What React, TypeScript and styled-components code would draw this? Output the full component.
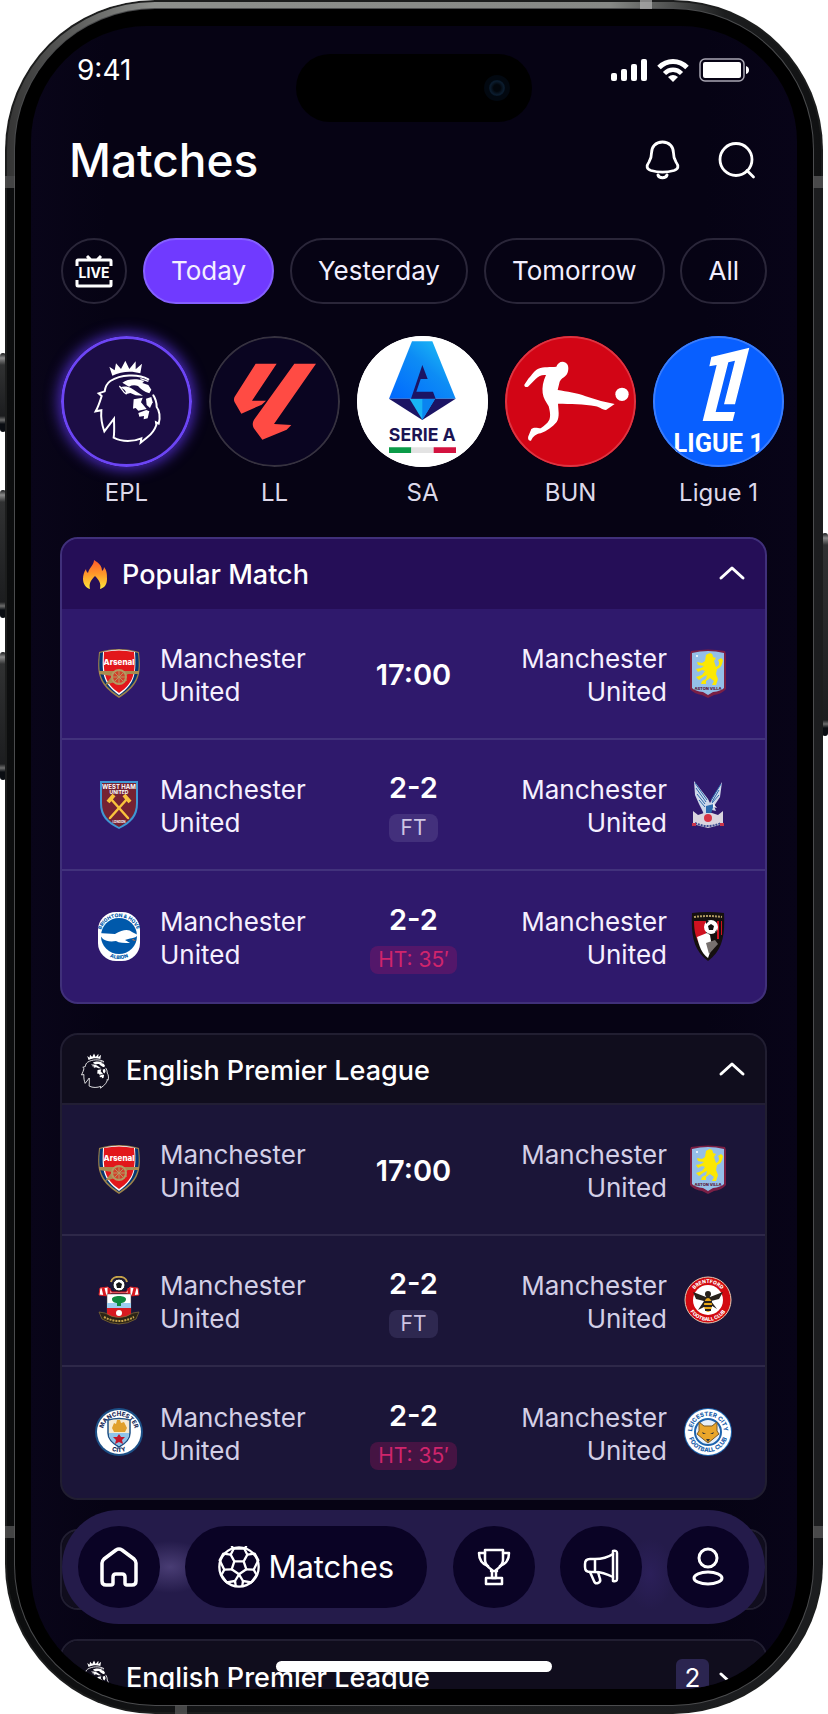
import React from "react";
import styled, { createGlobalStyle, css } from "styled-components";

const GlobalStyle = createGlobalStyle`
  * { box-sizing: border-box; }
  body { margin: 0; background: #ffffff; font-family: Inter, "Liberation Sans", sans-serif; overflow: hidden; }
  button { font: inherit; color: inherit; padding: 0; margin: 0; border: 0; background: none; cursor: pointer; }
  h1, h2, p, ul { margin: 0; padding: 0; }
  ul { list-style: none; }
  svg { display: block; }
`;

/* ---------- device ---------- */

const Stage = styled.div`
  position: relative;
  height: 100vh;
  padding: 0 5px;
`;

const SideKey = styled.span<{ $side: "left" | "right"; $top: number; $size: number }>`
  position: absolute;
  ${(p) => p.$side}: 0;
  top: ${(p) => p.$top}px;
  width: 6px;
  height: ${(p) => p.$size}px;
  border-radius: 3px;
  background: linear-gradient(180deg, #17181a 0, #8b8b8b 5px, #303132 12px, #1c1d1f calc(100% - 16px), #6c6c6c calc(100% - 12px), #0a0d12 calc(100% - 8px));
`;

const Frame = styled.div`
  position: relative;
  height: 100%;
  padding: 9px 10px;
  border-radius: 150px;
  background:
    linear-gradient(90deg, #333333 0, #8d8f8c 18%, #868885 74%, #1c1d1e 88%, #101112 100%) top / 100% 176px no-repeat,
    linear-gradient(90deg, #0c0d0e 0, #1b1c1e 50%, #1c1d1f 100%);
  box-shadow: inset 0 0 0 2px #1c1d1d;
`;

const bandEdges = {
  top: css`top: 0; left: 635px; width: 12px; height: 9px;`,
  leftTop: css`left: 0; top: 176px; width: 10px; height: 12px;`,
  rightTop: css`right: 0; top: 176px; width: 10px; height: 12px;`,
  leftBottom: css`left: 0; bottom: 176px; width: 10px; height: 12px;`,
  rightBottom: css`right: 0; bottom: 176px; width: 10px; height: 12px;`,
  bottom: css`left: 170px; bottom: 0; width: 12px; height: 9px;`,
};

const Band = styled.span<{ $at: keyof typeof bandEdges }>`
  position: absolute;
  background: ${(p) => (p.$at === "top" ? "#b4b4b4" : "#5c5c5c")};
  opacity: 0.7;
  ${(p) => bandEdges[p.$at]}
`;

const Bezel = styled.div`
  height: 100%;
  padding: 16px;
  padding-top: 17px;
  border-radius: 140px;
  background: #000000;
  box-shadow: 0 0 0 1px #4b4c4e;
`;

const Screen = styled.main`
  position: relative;
  height: 100%;
  border-radius: 116px;
  overflow: hidden;
  background: linear-gradient(90deg, #090519 0, #060314 10%, #060314 88%, #080418 100%);
  color: #ffffff;
`;

const Island = styled.div`
  position: absolute;
  z-index: 3;
  top: 28px;
  left: 50%;
  width: 236px;
  height: 68px;
  margin-left: -118px;
  border-radius: 34px;
  background: #000000;
  display: flex;
  align-items: center;
  justify-content: flex-end;
  padding-right: 22px;
`;

const Lens = styled.span`
  width: 26px;
  height: 26px;
  border-radius: 50%;
  border: 5px solid #020810;
  background: radial-gradient(circle, #02060c 30%, #0b1c2e 60%, #030c18 100%);
`;

const StatusBar = styled.div`
  display: flex;
  align-items: center;
  justify-content: space-between;
  height: 88px;
  padding: 0 46px;
  font-size: 28px;
  line-height: 32px;
`;

const StatusIcons = styled.div`
  display: flex;
  align-items: center;
  gap: 10px;
`;

/* ---------- header and filters ---------- */

const Header = styled.header`
  display: flex;
  align-items: center;
  justify-content: space-between;
  height: 92px;
  padding: 0 40px 0 38px;
`;

const Title = styled.h1`
  font-size: 46px;
  line-height: 56px;
  font-weight: 500;
`;

const HeaderActions = styled.div`
  display: flex;
  gap: 34px;
`;

const Filters = styled.div`
  display: flex;
  justify-content: space-between;
  padding: 32px 30px 0;
`;

const Chip = styled.button<{ $active?: boolean; $round?: boolean }>`
  display: grid;
  place-items: center;
  height: 66px;
  min-width: 66px;
  && { padding: ${(p) => (p.$round ? "0" : "0 26px")}; }
  && { border: 2px solid ${(p) => (p.$active ? "#8560ff" : "#2a2639")}; }
  border-radius: 33px;
  && { background: ${(p) => (p.$active ? "#703aff" : "transparent")}; }
  && { color: #f3efff; }
  && { font-size: 26px; font-weight: 400; line-height: 32px; }
`;

/* ---------- leagues ---------- */

const Leagues = styled.div`
  display: flex;
  gap: 17px;
  padding: 32px 30px 0;
`;

const League = styled.button`
  flex: none;
  display: flex;
  flex-direction: column;
  align-items: center;
  gap: 10px;
  && { color: #ddd9ea; font-size: 24px; line-height: 32px; font-weight: 400; }
`;

const LeagueDisc = styled.span<{ $bg: string; $ring: string; $active?: boolean }>`
  position: relative;
  display: block;
  width: 131px;
  height: 131px;
  border-radius: 50%;
  overflow: hidden;
  background: ${(p) => p.$bg};
  box-shadow: ${(p) => (p.$active ? "0 0 14px 3px #4a2ab8" : "none")};

  &::after {
    content: "";
    position: absolute;
    inset: 0;
    border-radius: 50%;
    border: ${(p) => (p.$active ? 3 : 2)}px solid ${(p) => p.$ring};
  }
`;

/* ---------- cards ---------- */

const tones = {
  popular: { head: "#250e57", body: "#2f196c", line: "#42327c", edge: "#40307a", split: "#250e57", text: "#f6f0ff", tag: "#43307c" },
  league: { head: "#100d1d", body: "#1b1538", line: "#2e2849", edge: "#211e31", split: "#221e34", text: "#d3cfe6", tag: "#2e2850" },
};
type Tone = keyof typeof tones;

const Cards = styled.div`
  display: flex;
  flex-direction: column;
  gap: 29px;
  padding: 28px 30px 0 29px;
`;

const Card = styled.section<{ $tone: Tone }>`
  flex: none;
  border: 2px solid ${(p) => tones[p.$tone].edge};
  border-radius: 18px;
  overflow: hidden;
  background: ${(p) => tones[p.$tone].body};
`;

const CardHead = styled.header<{ $tone: Tone; $closed?: boolean }>`
  display: flex;
  align-items: center;
  gap: ${(p) => (p.$tone === "league" ? 16 : 12)}px;
  height: ${(p) => (p.$closed ? 77 : 70)}px;
  padding: ${(p) => (p.$closed ? "0 18px 4px" : "4px 18px 0")};
  background: ${(p) => tones[p.$tone].head};
  border-bottom: ${(p) => (p.$closed ? "0" : `2px solid ${tones[p.$tone].split}`)};
`;

const CardTitle = styled.h2`
  flex: 1;
  font-size: 27px;
  line-height: 32px;
  font-weight: 500;
`;

const CardActions = styled.div`
  display: flex;
  align-items: center;
  gap: 8px;
`;

const Count = styled.span`
  display: grid;
  place-items: center;
  width: 33px;
  height: 38px;
  border-radius: 6px;
  background: #2b2550;
  font-size: 26px;
  line-height: 32px;
`;

const Row = styled.li<{ $tone: Tone }>`
  display: grid;
  grid-template-columns: 48px 1fr auto 1fr 48px;
  align-items: center;
  column-gap: 17px;
  height: 131px;
  padding: 0 33px;
  color: ${(p) => tones[p.$tone].text};
  border-bottom: 2px solid ${(p) => tones[p.$tone].line};
  &:last-child { border-bottom: 0; }
`;

const Team = styled.p<{ $right?: boolean }>`
  justify-self: ${(p) => (p.$right ? "end" : "start")};
  width: min-content;
  padding-top: 2px;
  text-align: ${(p) => (p.$right ? "right" : "left")};
  font-size: 26px;
  line-height: 33px;
  font-weight: 400;
`;

const Result = styled.div`
  display: flex;
  flex-direction: column;
  align-items: center;
  gap: 8px;
  padding-top: 2px;
`;

const Score = styled.strong`
  color: #ffffff;
  font-size: 29px;
  line-height: 36px;
  font-weight: 600;
`;

const Tag = styled.span<{ $tone: Tone; $live?: boolean }>`
  padding: 0 ${(p) => (p.$live ? 8 : 12)}px;
  border-radius: 8px;
  font-size: 21px;
  line-height: 28px;
  font-weight: 400;
  color: ${(p) => (p.$live ? "#cf256c" : "#cdc5e4")};
  background: ${(p) => (p.$live ? "rgba(190, 20, 100, 0.26)" : tones[p.$tone].tag)};
`;

/* ---------- bottom bar ---------- */

const TabBar = styled.nav`
  position: absolute;
  z-index: 2;
  left: 31px;
  right: 32px;
  bottom: 65px;
  display: flex;
  justify-content: space-between;
  padding: 16px;
  border-radius: 57px;
  background:
    radial-gradient(ellipse 42px 26px at 108px 57px, rgba(85, 72, 130, 0.75), rgba(85, 72, 130, 0)),
    radial-gradient(ellipse 24px 36px at 588px 64px, rgba(60, 42, 125, 0.3), rgba(60, 42, 125, 0)),
    #241b4a;
`;

const Tab = styled.button<{ $wide?: boolean }>`
  display: flex;
  align-items: center;
  justify-content: center;
  gap: 8px;
  height: 82px;
  width: ${(p) => (p.$wide ? "242px" : "82px")};
  border-radius: 41px;
  && { background: #0a0325; font-size: 31px; line-height: 38px; font-weight: 400; }
`;

const HomeIndicator = styled.div`
  position: absolute;
  z-index: 3;
  left: 50%;
  bottom: 17px;
  width: 276px;
  height: 11px;
  margin-left: -138px;
  border-radius: 6px;
  background: #ffffff;
`;

/* ---------- drawings ---------- */

const line = { fill: "none", stroke: "#fff", strokeLinecap: "round" as const, strokeLinejoin: "round" as const };

const LionShapes = () => (
  <>
    <path fill="#fff" d="M219 167 210 140l16 11 4-21 15 17 13-25 12 25 19-23 0 24 19-17-5 29c-28-9-58-5-84 7z" />
    <path
      {...line}
      strokeWidth="6"
      strokeLinejoin="miter"
      d="M327 178c-32-18-84-14-114 5-10 7-15 17-17 31l-18 6 9 8c-5 16-9 30-18 46l17-3c-2 24 2 44 9 63l29-38c0 18 2 36-1 57 26 14 60 12 83 2l-2 13 20-16c14-11 22-22 27-37l-1-8 8 4c6-20 2-40-6-50 0-18-4-26-10-35"
    />
    <path fill="#fff" d="M249 188c16-12 44-13 66-5l-6 6 18 6 9 14-6 11c-15-5-26-13-34-22-9-3-18-3-27 2z" />
    <path fill="#fff" d="M242 202c12-4 24-3 34 3 13 8 24 17 35 22l-22-1-16-7-14 4c4-9-7-17-17-21z" />
    <path fill="#fff" d="M283 238l27-5-5 14 17 20-25 5-8-8-8 2z" />
    <path fill="#fff" d="M320 236l16-5 4 16-8 17-10-9z" />
    <path fill="#fff" d="M297 279l24-9 9 4-5 21-12 3 1-10-14 2z" />
    <path fill="none" stroke="#fff" strokeWidth="4" d="M240 198c8 8 10 20 22 24M303 176l24 8" />
  </>
);

const LionIcon = () => (
  <svg width="30" height="36" viewBox="160 118 210 256" aria-hidden="true">
    <LionShapes />
  </svg>
);

const leagueArt = {
  EPL: (
    <svg width="131" height="131" viewBox="65 48 393 393">
      <LionShapes />
    </svg>
  ),
  LL: (
    <svg width="131" height="131" viewBox="508 48 393 393" fill="#ff4b44">
      <path d="M648 131h63l-74 111h42l-13 12-61 27-20-34c-3-6-3-12 1-18z" />
      <path d="M764 131h65L703 312l52 3-14 14-73 30-26-35c-4-8-4-17 1-25z" />
    </svg>
  ),
  SA: (
    <svg width="131" height="131" viewBox="-158 48 393 393">
      <defs>
        <linearGradient id="sa" x1="0" y1="1" x2="1" y2="0">
          <stop offset="0" stopColor="#0068ff" />
          <stop offset=".55" stopColor="#0d8cf5" />
          <stop offset="1" stopColor="#1fc8f5" />
        </linearGradient>
      </defs>
      <path fill="url(#sa)" d="M7 64h61l70 172H-62z" />
      <path fill="#1b1464" d="M-62 236h200L38 300z" />
      <path fill="#18b4f5" d="M0 237h76L38 299z" />
      <path fill="#0a84f0" d="M38 237h38L38 299z" />
      <path fill="#1b1464" d="M38 135l16 42H33l-13 38h50l8 21H4z" />
      <text x="38" y="362" textAnchor="middle" fontFamily="Inter" fontWeight="700" fontSize="53" fill="#1b1452">SERIE A</text>
      <path fill="#0b9b48" d="M-62 382H5v17h-67z" />
      <path fill="#e3e3e3" d="M5 382h67v17H5z" />
      <path fill="#d3123f" d="M72 382h67v17H72z" />
    </svg>
  ),
  BUN: (
    <svg width="131" height="131" viewBox="285 48 393 393" fill="#fff">
      <path d="M439 140c3-9 10-15 19-15 11 1 18 9 17 21-1 9-2 16-9 22-5 5-13 8-17 17l-6 25c28 5 58 8 84 19l46 14 41 9-26 18c-14-1-20-10-31-11-36-8-76-6-113-8l2 28c0 10-1 20-6 27-12 15-29 26-48 34-14 2-22 8-29 22-8 2-10-6-8-13l9-22c9-7 20-2 28-2 10-8 20-14 26-26 5-12 1-28-2-40-8-14-16-24-18-40-2-17 1-35 10-54-14-1-21 2-31 12l-23 23c-6 3-12-1-11-6l13-19c11-12 17-24 29-29 17-7 36-4 54-6z" />
      <circle cx="636" cy="223" r="20" />
    </svg>
  ),
  L1: (
    <svg width="131" height="131" viewBox="728 48 393 393" fill="#fff">
      <path d="M903 111l114-28-43 170h-33l33-131-20 5-38 149h58l-7 27h-90l42-168-22 4z" />
      <text x="925" y="396" textAnchor="middle" fontFamily="Roboto" fontWeight="700" fontSize="76">LIGUE 1</text>
    </svg>
  ),
};

const Flame = () => (
  <svg width="30" height="34" viewBox="0 0 30 34" aria-hidden="true">
    <defs>
      <linearGradient id="fl" x1="0" y1="0" x2="0" y2="1">
        <stop offset="0" stopColor="#ff5a2b" />
        <stop offset=".5" stopColor="#ff9a2a" />
        <stop offset="1" stopColor="#ffe73a" />
      </linearGradient>
    </defs>
    <path
      fill="url(#fl)"
      d="M14 2c5 3 8 6 8 11 1-1 2-2 2-4 3 4 3 7 3 12 0 6-3 9-7 10 1-5 0-8-5-13-5 5-6 8-5 13-4-1-7-5-7-10 0-4 1-7 3-10 0 2 1 3 2 4 1-5 6-8 6-13z"
    />
  </svg>
);

const Chevron = ({ down }: { down?: boolean }) => (
  <svg width="30" height="24" viewBox="0 0 30 24" aria-hidden="true">
    <path {...line} strokeWidth="3" d={down ? "M4 8l11 10L26 8" : "M4 15L15 5l11 10"} />
  </svg>
);

const ring = (id: string, r: number, top: string, bottom: string, color: string, size = 6) => (
  <>
    <defs>
      <path id={`${id}t`} d={`M${24 - r} 24a${r} ${r} 0 0 1 ${2 * r} 0`} />
      <path id={`${id}b`} d={`M${24 - r - 4} 24a${r + 4} ${r + 4} 0 0 0 ${2 * r + 8} 0`} />
    </defs>
    <g fontFamily="Inter" fontWeight="800" fontSize={size} fill={color} textAnchor="middle">
      <text><textPath href={`#${id}t`} startOffset="50%">{top}</textPath></text>
      <text><textPath href={`#${id}b`} startOffset="50%">{bottom}</textPath></text>
    </g>
  </>
);

const crests: Record<string, (id: string) => React.ReactNode> = {
  arsenal: () => (
    <>
      <path fill="#9c824a" d="M4 3c13-4 27-4 40 0 2 20 2 32-20 46C2 35 2 23 4 3z" />
      <path fill="#063672" d="M5 4c12-4 26-4 38 0 2 19 1 30-19 43C4 34 3 23 5 4z" />
      <path fill="#fff" d="M8 3c11-3 21-3 32 0 1 20 1 31-16 43C7 34 7 23 8 3z" />
      <path fill="#e2171b" d="M9 3c10-2 20-2 30 0 2 20 0 31-15 41C9 34 8 23 9 3z" />
      <text x="24" y="16" textAnchor="middle" fontFamily="Inter" fontWeight="800" fontSize="8" fill="#fff">Arsenal</text>
      <path fill="#a88b50" d="M4 22h40v3H33l-3 2 2 5-12 1-10 3 7-9-13-2z" />
      <circle cx="24" cy="28" r="7" fill="#d3402c" stroke="#b39a62" strokeWidth="2" />
      <path stroke="#b39a62" d="M18 28h12M24 22v12M20 24l8 8M28 24l-8 8" />
    </>
  ),
  villa: () => (
    <>
      <path fill="#7a1f45" d="M7 2q17-3 34 0l1 3v35q-4 5-12 6l-6 3-6-3Q10 45 6 40V5z" />
      <path fill="#94bfe8" d="M8 4q16-4 32 0v35q-3 3-11 4l-5 3-5-3q-8-1-11-4z" />
      <path fill="#fce803" d="M22 6c4-3 7-2 7 2l3 1-2 3 2 6c3-1 4-4 2-7l3-2 2 2c-1 6-3 8-6 9l-1 5 2 5-2 6h-4l2-4-4-3-4 3v3h-5l1-3 4-2 1-4-4 2-4 3-3-3 6-2 3-4-3-1-4 2-2-3 5-1 3-2-6-1-1-3 5 1 3-2z" />
      <circle cx="13" cy="7" r="1" fill="#fff" />
      <text x="24" y="41" textAnchor="middle" fontFamily="Inter" fontWeight="800" fontSize="4" fill="#5b1737">ASTON VILLA</text>
    </>
  ),
  westham: () => (
    <>
      <path fill="#3f97d3" d="M5 1h38v22c0 14-7 20-19 26C12 43 5 37 5 23z" />
      <path fill="#752233" d="M7 3h34v20c0 12-6 18-17 24C13 41 7 35 7 23z" />
      <g fontFamily="Inter" fontWeight="700" fill="#fff" textAnchor="middle">
        <text x="24" y="9" fontSize="6">WEST HAM</text>
        <text x="24" y="14" fontSize="5">UNITED</text>
        <text x="24" y="43" fontSize="3">LONDON</text>
      </g>
      <path stroke="#f9c33c" strokeWidth="2.500" strokeLinecap="round" d="M16 19l17 19M32 19L15 38" />
      <path stroke="#f9c33c" strokeWidth="4" d="M13 22l6-7M29 15l6 7" />
    </>
  ),
  palace: () => (
    <>
      <path fill="#cfd8ea" d="M10 1l14 18 2 4 5-9 7-12-2 15-6 9 2 5-4-1-4 6h-4l-1-4-4-8-4-9z" />
      <g stroke="#2b69ad" strokeWidth="1" fill="none">
        <path d="M11 3l12 17M12 8l10 14M13 14l8 10M15 20l6 7M37 4L27 20M35 10l-7 12M35 15l-7 8" />
      </g>
      <path fill="#2b69ad" d="M22 26l8-2-3 10h-5z" />
      <path fill="#f2f2f5" d="M29 23l4 5-4-1z" />
      <path fill="#d9d4df" d="M9 31l5 4 6-2h8l6 2 5-4v13l-7 2-8 2-8-2-7-2z" />
      <circle cx="24" cy="38" r="4" fill="#d83345" />
      <path fill="none" stroke="#3b4a90" strokeWidth="2" strokeDasharray="2 1" d="M11 43q13 6 26 0" />
      <path fill="#c8334a" d="M8 43h4v3H8zM36 43h4v3h-4z" />
    </>
  ),
  brighton: (id) => (
    <>
      <rect x="3" y="0" width="42" height="49" rx="18" fill="#fff" />
      <circle cx="24" cy="24" r="18" fill="#0059ab" />
      <path fill="#fff" d="M3 21l17 1c8-5 14-5 17-2l6 3c-3 4-9 3-13 5l5 3c-6 0-11 0-14-2-6 1-10 0-13-2z" />
      <path fill="#ef7b2a" d="M38 27l3 2-4-1z" />
      {ring(id, 19, "BRIGHTON & HOVE", "ALBION", "#0059ab", 5)}
    </>
  ),
  bournemouth: () => (
    <>
      <path fill="#15100f" d="M8 1q16-2 32 0c1 22-1 37-16 48C9 38 7 23 8 1z" />
      <path fill="#cf1120" d="M10 9h12v30C12 31 10 20 10 9z" />
      <path fill="#cf1120" d="M33 9h2v18h-2zM37 9h1v14h-1z" />
      <path fill="none" stroke="#b19a63" strokeWidth="2" strokeDasharray="2 1" d="M10 5q14-2 28 0" />
      <path fill="#fff" d="M13 25l10-4 3 2 2 12-4 11c-6-4-9-12-11-21z" />
      <path fill="#77716f" d="M22 31l9-3 3 4-9 10z" />
      <circle cx="27" cy="15" r="7" fill="#fff" />
      <path fill="#111" d="M27 12l3 2-1 4h-4l-1-4zM22 9l3 0-3 3zM31 20l2-3-1 4z" />
    </>
  ),
  saints: () => (
    <>
      <path fill="none" stroke="#c5a24a" strokeWidth="2" d="M16 6c1-7 15-7 16 0" />
      <path fill="#fff" stroke="#d71920" strokeWidth="1" d="M5 12l8-1 4 5h14l4-5 8 1 1 7-9 1-3-3H16l-3 3-9-1z" />
      <path stroke="#d71920" strokeWidth="3" d="M8 12l2 8M14 12v6M40 12l-2 8M34 12v6" />
      <circle cx="24" cy="9" r="6" fill="#fff" stroke="#151515" />
      <path fill="#151515" d="M24 6l3 2-1 4h-4l-1-4z" />
      <path fill="#fff" stroke="#444" strokeWidth=".5" d="M12 18h24v19H12z" />
      <path fill="#9ccdf0" d="M12 27h24v5H12z" />
      <path fill="#d71920" d="M12 32h24v6q-4 6-12 7-8-1-12-7z" />
      <path fill="#0f8a3f" d="M17 23c0-4 14-4 14 0 0 3-3 4-5 4v3h-4v-3c-2 0-5-1-5-4z" />
      <circle cx="24" cy="37" r="3" fill="#fff" />
      <path fill="#2b2416" stroke="#8a713a" strokeWidth=".7" d="M4 36l6 1q14 9 28 0l6-1-3 7q-17 10-34 0z" />
      <path fill="none" stroke="#c5a24a" strokeWidth="2" strokeDasharray="2 1" d="M9 41q15 8 30 0" />
    </>
  ),
  brentford: (id) => (
    <>
      <circle cx="24" cy="24" r="23" fill="#d20a10" stroke="#e7c9b0" />
      <circle cx="24" cy="24" r="15" fill="#fff" />
      {ring(id, 17, "BRENTFORD", "FOOTBALL CLUB", "#fff", 5)}
      <path fill="#27211b" d="M9 16l13 5 1-4h2l1 4 13-5-4 7-8 2 6 8-8-5-1 2-2 0-8 4 6-9-8-2z" />
      <ellipse cx="24" cy="29" rx="4" ry="7" fill="#e8a919" />
      <path stroke="#27211b" strokeWidth="2" d="M20 26h8M20 30h8M21 34h6" />
      <circle cx="24" cy="18" r="3" fill="#27211b" />
    </>
  ),
  city: (id) => (
    <>
      <circle cx="24" cy="24" r="24" fill="#1c4f86" />
      <circle cx="24" cy="24" r="22" fill="#fff" />
      {ring(id, 16, "MANCHESTER", "CITY", "#1c2c5b", 6)}
      <path fill="#f7ead0" stroke="#1c4f86" strokeWidth="1.500" d="M13 12q11-3 22 0v13c0 6-4 10-11 14-7-4-11-8-11-14z" />
      <path fill="#8fc3ea" d="M14 25h20c0 6-3 9-10 13-7-4-10-7-10-13z" />
      <path fill="#e0a02c" d="M17 20l2-5 2 1 1-4h3l1 3 3-1 3 6-2 4H19z" />
      <path fill="#c3152b" d="M24 26l2 3 4 0-3 3 1 4-4-2-4 2 1-4-3-3 4 0z" />
    </>
  ),
  leicester: (id) => (
    <>
      <circle cx="24" cy="24" r="24" fill="#1d63ad" />
      <circle cx="24" cy="24" r="23" fill="#fff" />
      {ring(id, 16, "LEICESTER CITY", "FOOTBALL CLUB", "#1d63ad", 6)}
      <circle cx="24" cy="24" r="13" fill="#e8f0f8" stroke="#1d63ad" strokeWidth="2" />
      <path fill="#eaa62a" stroke="#7a5a28" d="M15 14l5 4h8l5-4v9l2 3-6 5-5 4-5-4-6-5 2-3z" />
      <path fill="#333" d="M18 24l4 2-3 0zM30 24l-4 2 3 0z" />
      <path fill="#333" d="M22 31h4l-2 3z" />
    </>
  ),
};

const Crest = ({ name, id }: { name: string; id: string }) => (
  <svg width="48" height="50" viewBox="0 0 48 50" aria-hidden="true">
    {crests[name](id)}
  </svg>
);

/* ---------- data ---------- */

type Match = { home: string; away: string; score: string; tag?: string; live?: boolean };

const popular: Match[] = [
  { home: "arsenal", away: "villa", score: "17:00" },
  { home: "westham", away: "palace", score: "2-2", tag: "FT" },
  { home: "brighton", away: "bournemouth", score: "2-2", tag: "HT: 35′", live: true },
];

const premier: Match[] = [
  { home: "arsenal", away: "villa", score: "17:00" },
  { home: "saints", away: "brentford", score: "2-2", tag: "FT" },
  { home: "city", away: "leicester", score: "2-2", tag: "HT: 35′", live: true },
];

const leagues = [
  { label: "EPL", art: leagueArt.EPL, bg: "#1c0d45", ring: "#6c45f5", active: true },
  { label: "LL", art: leagueArt.LL, bg: "#0a0521", ring: "#36323f" },
  { label: "SA", art: leagueArt.SA, bg: "#ffffff", ring: "#ffffff" },
  { label: "BUN", art: leagueArt.BUN, bg: "#d20515", ring: "#dc3542" },
  { label: "Ligue 1", art: leagueArt.L1, bg: "#085fff", ring: "#3c7dfa" },
];

const MatchList = ({ items, tone }: { items: Match[]; tone: Tone }) => (
  <ul>
    {items.map((m) => (
      <Row key={m.home} $tone={tone}>
        <Crest name={m.home} id={m.home} />
        <Team>Manchester United</Team>
        <Result>
          <Score>{m.score}</Score>
          {m.tag && <Tag $tone={tone} $live={m.live}>{m.tag}</Tag>}
        </Result>
        <Team $right>Manchester United</Team>
        <Crest name={m.away} id={m.away} />
      </Row>
    ))}
  </ul>
);

export default function App() {
  return (
    <>
      <GlobalStyle />
      <Stage>
        <SideKey $side="left" $top={353} $size={79} />
        <SideKey $side="left" $top={490} $size={128} />
        <SideKey $side="left" $top={652} $size={128} />
        <SideKey $side="right" $top={533} $size={203} />
        <Frame>
          <Band $at="top" />
          <Band $at="leftTop" />
          <Band $at="rightTop" />
          <Band $at="leftBottom" />
          <Band $at="rightBottom" />
          <Band $at="bottom" />
          <Bezel>
            <Screen>
              <Island><Lens /></Island>
              <StatusBar>
                <span>9:41</span>
                <StatusIcons>
                  <svg width="36" height="24" viewBox="0 0 36 24" fill="#fff" aria-hidden="true">
                    <rect x="0" y="15" width="6" height="8" rx="2" />
                    <rect x="10" y="11" width="6" height="12" rx="2" />
                    <rect x="20" y="6" width="6" height="17" rx="2" />
                    <rect x="30" y="1" width="6" height="22" rx="2" />
                  </svg>
                  <svg width="32" height="24" viewBox="0 0 32 24" fill="none" stroke="#fff" strokeWidth="5" aria-hidden="true">
                    <path d="M2 9.500c8-8 20-8 28 0" />
                    <path d="M7.500 15.500c5-5 12-5 17 0" strokeWidth="4.500" />
                    <path d="M16 24l-5-5q5-4 10 0z" fill="#fff" stroke="none" />
                  </svg>
                  <svg width="52" height="24" viewBox="0 0 52 24" aria-hidden="true">
                    <rect x="1" y="1" width="44" height="22" rx="5" fill="none" stroke="#a9a7b3" strokeWidth="1.500" />
                    <rect x="4" y="4" width="38" height="16" rx="2" fill="#fff" />
                    <path d="M47 8q3 1 3 4t-3 4z" fill="#fff" />
                  </svg>
                </StatusIcons>
              </StatusBar>

              <Header>
                <Title>Matches</Title>
                <HeaderActions>
                  <button aria-label="Notifications">
                    <svg width="40" height="40" viewBox="0 0 40 40" {...line} strokeWidth="2.800">
                      <path d="M19.500 2c-7 0-11 5-11 11 0 5-.5 6-2.500 9-3 4-2.500 7 2 8.500 7 2 16 2 23 0 4.500-1.500 5-4.500 2-8.500-2-3-2.500-4-2.500-9 0-6-4-11-11-11z" />
                      <path d="M15 35c1 3.500 8 3.500 9 0" strokeWidth="3" />
                    </svg>
                  </button>
                  <button aria-label="Search">
                    <svg width="40" height="40" viewBox="0 0 40 40" {...line} strokeWidth="2.800">
                      <circle cx="19" cy="19.500" r="16" />
                      <path d="M30 30.500l6.500 6.500" />
                    </svg>
                  </button>
                </HeaderActions>
              </Header>

              <Filters>
                <Chip $round aria-label="Live">
                  <svg width="40" height="34" viewBox="0 0 40 34" fill="none" stroke="#fff" strokeWidth="3">
                    <path d="M3 12V7q0-1 1-1h32q1 0 1 1v5M3 26v5q0 1 1 1h32q1 0 1-1v-5M13 2l4 4M27 2l-4 4" />
                    <text x="20" y="24" textAnchor="middle" fontFamily="Inter" fontWeight="700" fontSize="14" fill="#fff" stroke="none">LIVE</text>
                  </svg>
                </Chip>
                <Chip $active>Today</Chip>
                <Chip>Yesterday</Chip>
                <Chip>Tomorrow</Chip>
                <Chip>All</Chip>
              </Filters>

              <Leagues>
                {leagues.map((l) => (
                  <League key={l.label}>
                    <LeagueDisc $bg={l.bg} $ring={l.ring} $active={l.active}>{l.art}</LeagueDisc>
                    {l.label}
                  </League>
                ))}
              </Leagues>

              <Cards>
                <Card $tone="popular">
                  <CardHead $tone="popular">
                    <Flame />
                    <CardTitle>Popular Match</CardTitle>
                    <button aria-label="Collapse popular matches"><Chevron /></button>
                  </CardHead>
                  <MatchList items={popular} tone="popular" />
                </Card>
                <Card $tone="league">
                  <CardHead $tone="league">
                    <LionIcon />
                    <CardTitle>English Premier League</CardTitle>
                    <button aria-label="Collapse league"><Chevron /></button>
                  </CardHead>
                  <MatchList items={premier} tone="league" />
                </Card>
                <Card $tone="league">
                  <CardHead $tone="league" $closed />
                </Card>
                <Card $tone="league">
                  <CardHead $tone="league" $closed>
                    <LionIcon />
                    <CardTitle>English Premier League</CardTitle>
                    <CardActions>
                      <Count>2</Count>
                      <button aria-label="Expand league"><Chevron down /></button>
                    </CardActions>
                  </CardHead>
                </Card>
              </Cards>

              <TabBar>
                <Tab aria-label="Home">
                  <svg width="42" height="42" viewBox="0 0 42 42" {...line} strokeWidth="3.500">
                    <path d="M4 17q0-2 2-4L18 4q3-2 6 0l12 9q2 2 2 4v18q0 4-4 4h-5q-2 0-2-2v-6q0-3-3-3h-6q-3 0-3 3v6q0 2-2 2H8q-4 0-4-4z" />
                  </svg>
                </Tab>
                <Tab $wide>
                  <svg width="42" height="42" viewBox="472 137 126 126" {...line} strokeWidth="7" aria-hidden="true">
                    <circle cx="535" cy="200" r="59" />
                    <path d="M521 183h28l8 24-22 15-22-15z" />
                    <path d="M521 183l-11-20 9-18h32l9 18-11 20" />
                    <path d="M560 163l22-3 11 20-14 28-22-1M510 163l-22-3-11 20 14 28 22-1" />
                    <path d="M579 208l9 16-16 22-25-4-12-20M491 208l-9 16 16 22 25-4 12-20" />
                    <path d="M547 242l-2 14M523 242l2 14M551 145l5-6M519 145l-5-6" />
                  </svg>
                  Matches
                </Tab>
                <Tab aria-label="Trophies">
                  <svg width="36" height="40" viewBox="0 0 36 40" {...line} strokeWidth="2.500">
                    <path d="M9 3h18v10c0 5-4 8-7 10v8h-4v-8c-3-2-7-5-7-10z" />
                    <path d="M9 6H3c0 7 3 11 9 13M27 6h6c0 7-3 11-9 13M15 24h6" />
                    <path d="M10 31h16v6H10z" />
                  </svg>
                </Tab>
                <Tab aria-label="News">
                  <svg width="40" height="40" viewBox="0 0 40 40" {...line} strokeWidth="2.500">
                    <path d="M32 4q4-1 4 2v26q0 3-4 2z" />
                    <path d="M32 7c-6 4-12 5-18 5H9q-5 0-5 5v3q0 5 5 5h5c6 0 12 2 18 5M14 12v13" />
                    <path d="M9 25l4 9q1 3 4 2t2-4l-2-7" />
                  </svg>
                </Tab>
                <Tab aria-label="Profile">
                  <svg width="36" height="42" viewBox="0 0 36 42" {...line} strokeWidth="3">
                    <circle cx="18" cy="12" r="9" />
                    <ellipse cx="18" cy="32" rx="14" ry="6" />
                  </svg>
                </Tab>
              </TabBar>
              <HomeIndicator />
            </Screen>
          </Bezel>
        </Frame>
      </Stage>
    </>
  );
}
